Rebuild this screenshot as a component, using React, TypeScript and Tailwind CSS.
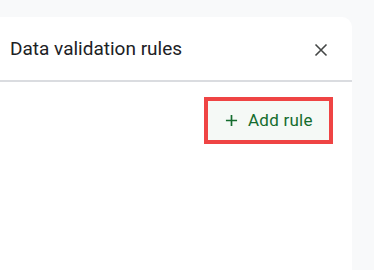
export default function App() {
  return (
    <div className="h-[270px] w-[374px] overflow-hidden bg-[#f8f9fa] pt-[17px]" style={{ fontFamily: 'Roboto, "Noto Sans", sans-serif' }}>
      <div className="h-[253px] w-[352px] rounded-tr-[10px] bg-white">
        {/* Header */}
        <div className="flex h-[63px] items-center justify-between pl-[10px] pr-[24px] pt-[2px]">
          <span className="text-[19px] text-[#202124]">Data validation rules</span>
          <svg width="14" height="14" viewBox="0 0 14 14" className="text-[#444746]">
            <path d="M1.5 1.5 L12.5 12.5 M12.5 1.5 L1.5 12.5" stroke="currentColor" strokeWidth="1.6" />
          </svg>
        </div>
        <div className="h-[2px] bg-[#dadce0]" />

        {/* Add rule */}
        <div className="flex justify-end pr-[19px] pt-[15px]">
          <div className="flex h-[47px] w-[129px] items-center border-4 border-[#ef4444] bg-[#f5f9f6] pl-[17px]">
            <svg width="13" height="13" viewBox="0 0 14 14" className="text-[#146c2e]">
              <path d="M7 1 V13 M1 7 H13" stroke="currentColor" strokeWidth="1.8" />
            </svg>
            <span className="ml-[10px] text-[17px] tracking-[0.25px] text-[#146c2e]">Add rule</span>
          </div>
        </div>
      </div>
    </div>
  );
}
